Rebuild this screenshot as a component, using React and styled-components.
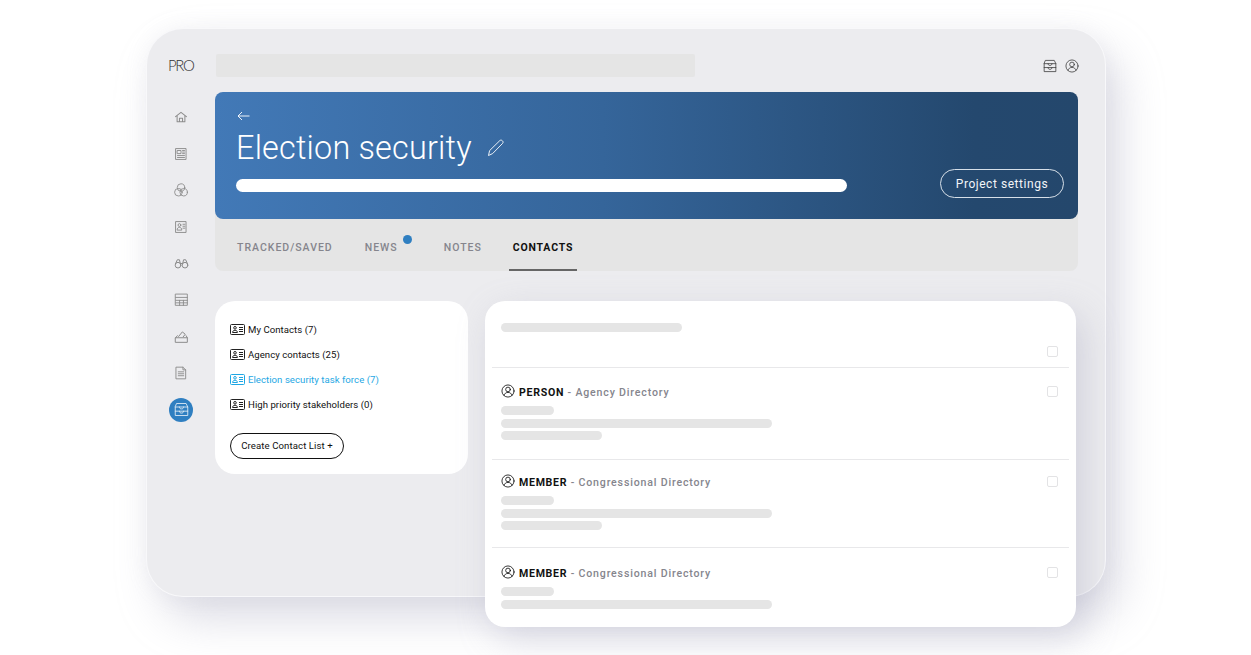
import React from 'react';
import styled, { createGlobalStyle } from 'styled-components';

const GlobalStyle = createGlobalStyle`
    html, body {
        margin: 0;
        padding: 0;
        background: #fff;
        font-family: "Roboto", "Liberation Sans", sans-serif;
    }
`;

const Page = styled.div`
    width: 1251px;
    height: 655px;
    padding: 29px 0 0 147px;
    box-sizing: border-box;
    overflow: hidden;
    background: #fff;
`;

const Device = styled.div`
    width: 958px;
    height: 567px;
    box-sizing: border-box;
    padding: 25px 27px 0 22px;
    border-radius: 36px;
    background: #ececef;
    box-shadow: 0 0 0 1px #f8f8fa, 14px 22px 44px rgba(165, 165, 188, 0.4), 0 0 22px rgba(190, 190, 205, 0.14);
    display: grid;
    grid-template-columns: 46px 1fr;
    grid-template-rows: 23px 1fr;
    row-gap: 15px;
`;

const Logo = styled.div`
    margin-left: -1px;
    font-family: "Lato", sans-serif;
    font-weight: 300;
    font-size: 15px;
    line-height: 23px;
    color: #333;
    letter-spacing: -1.4px;
`;

const TopBar = styled.div`
    display: flex;
    align-items: center;
    justify-content: space-between;
`;

const SearchBar = styled.div`
    width: 479px;
    height: 23px;
    margin-left: 1px;
    background: #e5e5e5;
    border-radius: 2px;
`;

const TopIcons = styled.div`
    display: flex;
    align-items: center;
    gap: 8px;
    margin-right: -1px;
    color: #3a3a3a;
`;

const TopIcon = styled.span`
    display: flex;
`;

const Sidebar = styled.nav`
    width: 24px;
    padding-top: 16px;
    display: flex;
    flex-direction: column;
    align-items: center;
    gap: 18.6px;
`;

const NavItem = styled.div`
    width: 18px;
    height: 18px;
    display: flex;
    align-items: center;
    justify-content: center;
    color: #8c8c8c;
`;

const ActiveNav = styled.div`
    width: 24px;
    height: 24px;
    margin-top: -3px;
    border-radius: 50%;
    background: #2f7fc1;
    color: #e8f0f8;
    display: flex;
    align-items: center;
    justify-content: center;
`;

const Main = styled.main`
    display: flex;
    flex-direction: column;
    min-width: 0;
`;

const Hero = styled.section`
    height: 127px;
    box-sizing: border-box;
    padding: 15px 14px 0 21px;
    border-radius: 8px;
    background: linear-gradient(90deg, #4279b7 0%, #35659a 45%, #24486e 88%, #24476c 100%);
    color: #fff;
    position: relative;
    z-index: 1;
`;

const BackArrow = styled.div`
    height: 18px;
    margin-left: 1px;
    display: flex;
    align-items: center;
`;

const TitleRow = styled.div`
    display: flex;
    align-items: center;
    gap: 15px;
    height: 40px;
    margin-top: 3px;
`;

const Title = styled.h1`
    margin: 0;
    font-weight: 300;
    font-size: 32.4px;
    line-height: 40px;
    letter-spacing: 0.2px;
`;

const HeroBottom = styled.div`
    display: flex;
    align-items: center;
    justify-content: space-between;
    margin-top: 4px;
`;

const ProgressBar = styled.div`
    width: 611px;
    height: 13px;
    margin-top: 1px;
    border-radius: 7px;
    background: #fff;
`;

const SettingsButton = styled.button`
    width: 124px;
    height: 29px;
    padding: 0;
    margin-top: -3px;
    border: 1px solid #d6dfe8;
    border-radius: 15px;
    background: transparent;
    color: #f2f5f8;
    font-family: inherit;
    font-size: 12px;
    letter-spacing: 0.55px;
`;

const Tabs = styled.div`
    margin-top: -8px;
    padding: 8px 0 0 22px;
    display: flex;
    border-radius: 0 0 8px 8px;
    background: #e5e5e5;
`;

const Tab = styled.div`
    position: relative;
    margin-left: ${p => p.$gap}px;
    padding: 7px ${p => (p.$active ? 4 : 0)}px 0;
    height: 52px;
    box-sizing: border-box;
    display: flex;
    align-items: center;
    font-size: 10.5px;
    font-weight: ${p => (p.$active ? 700 : 500)};
    letter-spacing: ${p => (p.$active ? 0.8 : 1)}px;
    color: ${p => (p.$active ? '#111' : '#85858d')};
    border-bottom: 2px solid ${p => (p.$active ? '#666' : 'transparent')};
`;

const Dot = styled.span`
    position: absolute;
    top: 16px;
    right: -14px;
    width: 9px;
    height: 9px;
    border-radius: 50%;
    background: #2f7fc1;
`;

const Panels = styled.div`
    margin-top: 30px;
    display: flex;
    align-items: flex-start;
    gap: 17px;
`;

const ListCard = styled.aside`
    width: 253px;
    box-sizing: border-box;
    padding: 20px 15px 15px;
    border-radius: 20px;
    background: #fff;
`;

const ContactLists = styled.ul`
    list-style: none;
    margin: 0 0 20px;
    padding: 0;
    display: flex;
    flex-direction: column;
    gap: 9.3px;
`;

const ContactList = styled.li`
    height: 16px;
    display: flex;
    align-items: center;
    gap: 3px;
    font-size: 9.6px;
    letter-spacing: 0.04px;
    color: ${p => (p.$active ? '#1ea7e4' : '#111')};
`;

const CreateButton = styled.button`
    width: 114px;
    height: 26px;
    padding: 0;
    border: 1px solid #111;
    border-radius: 13px;
    background: #fff;
    color: #111;
    font-family: inherit;
    font-size: 9.6px;
    letter-spacing: 0.1px;
`;

const ResultsCard = styled.section`
    width: 591px;
    box-sizing: border-box;
    padding: 0 7px;
    border-radius: 20px;
    background: #fff;
    box-shadow: 8px 12px 34px rgba(165, 165, 190, 0.38);
`;

const Row = styled.div`
    padding: ${p => p.$top}px 11px ${p => p.$bottom}px 9px;
    border-bottom: ${p => (p.$last ? 'none' : '1px solid #e8e8ea')};
`;

const RowHead = styled.div`
    height: 16px;
    display: flex;
    align-items: center;
    gap: 4px;
`;

const RowTitle = styled.span`
    margin-bottom: 1px;
`;

const Kind = styled.span`
    font-size: 10.6px;
    font-weight: 700;
    letter-spacing: 0.7px;
    color: #111;
`;

const Source = styled.span`
    font-size: 10.6px;
    font-weight: 500;
    letter-spacing: 0.82px;
    color: #85858d;
`;

const Checkbox = styled.span`
    width: 11px;
    height: 11px;
    margin-left: auto;
    display: block;
    border: 1px solid #e3e3e5;
    border-radius: 2px;
    box-sizing: border-box;
`;

const Lines = styled.div`
    margin-top: 7px;
    display: flex;
    flex-direction: column;
    gap: 3.5px;
`;

const Line = styled.div`
    width: ${p => p.$w}px;
    height: 9px;
    border-radius: 5px;
    background: #e5e5e5;
`;

const HeadLine = styled(Line)`
    margin-bottom: 14px;
`;

const Glyph = ({ size = 18, children }) => (
    <svg width={size} height={size} viewBox="0 0 18 18" fill="none" stroke="currentColor" strokeWidth="1" strokeLinecap="round" strokeLinejoin="round">
        {children}
    </svg>
);

const HomeIcon = () => (
    <Glyph size={14}><path d="M2 8.5 9 3l7 5.5M4 7.5V15h10V7.5M7 15v-4.5h4V15" strokeWidth="1.3" /></Glyph>
);
const NewsIcon = () => (
    <Glyph size={14}><path d="M2.5 2h13v14h-13zM4.5 4.5h4.5v4H4.5zM11 4.5h2.5M11 6.5h2.5M11 8.5h2.5M4.5 11h9M4.5 13.5h9" strokeWidth="1.2" /></Glyph>
);
const VennIcon = () => (
    <Glyph size={16}><circle cx="9" cy="6.2" r="4.2" /><circle cx="6" cy="11.5" r="4.2" /><circle cx="12" cy="11.5" r="4.2" /></Glyph>
);
const CardBookIcon = () => (
    <Glyph size={14}><path d="M2.5 2h13v14h-13zM11.5 5.5h2.5M11.5 8h2.5M11.5 10.5h2.5" strokeWidth="1.2" /><circle cx="7" cy="6.5" r="1.8" strokeWidth="1.2" /><path d="M4 12.5c0-2 1.3-3 3-3s3 1 3 3z" strokeWidth="1.2" /></Glyph>
);
const BinocularsIcon = () => (
    <Glyph size={15}><circle cx="4.8" cy="11" r="3.4" strokeWidth="1.2" /><circle cx="13.2" cy="11" r="3.4" strokeWidth="1.2" /><path d="M7.6 9h2.8M2 9l2-4.5h2.5L7.6 9M16 9l-2-4.5h-2.5L10.4 9" strokeWidth="1.2" /></Glyph>
);
const CalendarIcon = () => (
    <Glyph size={15}><path d="M2 2.5h14v13.5H2zM2 6.5h14M2 10h14M2 13h14M6.7 10v6M11.3 10v6" strokeWidth="1.1" /></Glyph>
);
const BallotIcon = () => (
    <Glyph size={15}><path d="M2 10.5h14V16H2zM2 10.5 4 8M16 10.5 14.5 8M5.5 9 10 3.5l3.5 2.8-2.4 3" strokeWidth="1.2" /></Glyph>
);
const DocIcon = () => (
    <Glyph size={14}><path d="M3 1.5h8.5l3.5 3.5v11.5H3zM11.5 1.5V5H15M5.5 7.5h7M5.5 10h7M5.5 12.5h7" strokeWidth="1.2" /></Glyph>
);
const InboxIcon = ({ size = 14 }) => (
    <Glyph size={size}>
        <path d="M3.5 1.8h11L16.5 6v10.2h-15V6zM1.5 6h15M1.5 11h15M6.5 6c0 1.6 1 2.3 2.5 2.3s2.5-.7 2.5-2.3M6.5 11c0 1.6 1 2.3 2.5 2.3s2.5-.7 2.5-2.3" />
    </Glyph>
);
const PersonCircle = ({ size = 14 }) => (
    <Glyph size={size}><circle cx="9" cy="9" r="7.8" /><circle cx="9" cy="7" r="3" /><path d="M3.8 14.6c.8-2.6 2.8-3.8 5.2-3.8s4.4 1.2 5.2 3.8" /></Glyph>
);
const CardIcon = styled.svg`
    color: ${p => (p.$active ? '#1ea7e4' : '#222')};
`;
const ContactCard = ({ active }) => (
    <CardIcon $active={active} width="15" height="11" viewBox="0 0 15 11" fill="none" stroke="currentColor" strokeWidth="1">
        <rect x="0.5" y="0.5" width="14" height="10" rx="1" />
        <circle cx="5" cy="3.8" r="1.3" />
        <path d="M2.6 8.5c0-1.5 1-2.2 2.4-2.2s2.4.7 2.4 2.2zM9 3.5h4M9 5.5h4M9 7.5h4" />
    </CardIcon>
);

const navIcons = [HomeIcon, NewsIcon, VennIcon, CardBookIcon, BinocularsIcon, CalendarIcon, BallotIcon, DocIcon];

const lists = [
    { name: 'My Contacts (7)' },
    { name: 'Agency contacts (25)' },
    { name: 'Election security task force (7)', active: true },
    { name: 'High priority stakeholders (0)' },
];

const rows = [
    { kind: 'PERSON', source: 'Agency Directory', top: 15, bottom: 19, lines: [53, 271, 101] },
    { kind: 'MEMBER', source: 'Congressional Directory', top: 13, bottom: 17, lines: [53, 271, 101] },
    { kind: 'MEMBER', source: 'Congressional Directory', top: 16, bottom: 18, lines: [53, 271], last: true },
];

const tabs = [
    { name: 'TRACKED/SAVED', gap: 0 },
    { name: 'NEWS', gap: 32, dot: true },
    { name: 'NOTES', gap: 46 },
    { name: 'CONTACTS', gap: 27, active: true },
];

export default function App() {
    return (
        <Page>
            <GlobalStyle />
            <Device>
                <Logo>PRO</Logo>
                <TopBar>
                    <SearchBar />
                    <TopIcons>
                        <TopIcon><InboxIcon size={14} /></TopIcon>
                        <TopIcon><PersonCircle size={14} /></TopIcon>
                    </TopIcons>
                </TopBar>
                <Sidebar>
                    {navIcons.map((Icon, i) => (
                        <NavItem key={i}><Icon /></NavItem>
                    ))}
                    <ActiveNav><InboxIcon size={15} /></ActiveNav>
                </Sidebar>
                <Main>
                    <Hero>
                        <BackArrow>
                            <svg width="13" height="10" viewBox="0 0 13 10" fill="none" stroke="#fff" strokeWidth="0.9">
                                <path d="M12.5 5H1M5 1 1 5l4 4" />
                            </svg>
                        </BackArrow>
                        <TitleRow>
                            <Title>Election security</Title>
                            <svg width="18" height="18" viewBox="0 0 18 18" fill="none" stroke="#fff" strokeWidth="0.9" strokeLinejoin="round">
                                <path d="M1.5 16.5 2.6 11.6 12.8 1.6c.8-.7 1.8-.6 2.6.2s.9 1.8.2 2.6L5.6 14.6z" />
                            </svg>
                        </TitleRow>
                        <HeroBottom>
                            <ProgressBar />
                            <SettingsButton>Project settings</SettingsButton>
                        </HeroBottom>
                    </Hero>
                    <Tabs>
                        {tabs.map(t => (
                            <Tab key={t.name} $gap={t.gap} $active={t.active}>
                                {t.name}
                                {t.dot && <Dot />}
                            </Tab>
                        ))}
                    </Tabs>
                    <Panels>
                        <ListCard>
                            <ContactLists>
                                {lists.map(l => (
                                    <ContactList key={l.name} $active={l.active}>
                                        <ContactCard active={l.active} />
                                        {l.name}
                                    </ContactList>
                                ))}
                            </ContactLists>
                            <CreateButton>Create Contact List +</CreateButton>
                        </ListCard>
                        <ResultsCard>
                            <Row $top={22} $bottom={10}>
                                <HeadLine $w={181} />
                                <Checkbox />
                            </Row>
                            {rows.map((r, i) => (
                                <Row key={i} $top={r.top} $bottom={r.bottom} $last={r.last}>
                                    <RowHead>
                                        <PersonCircle size={14} />
                                        <RowTitle>
                                            <Kind>{r.kind}</Kind>
                                            <Source> - {r.source}</Source>
                                        </RowTitle>
                                        <Checkbox />
                                    </RowHead>
                                    <Lines>
                                        {r.lines.map((w, j) => <Line key={j} $w={w} />)}
                                    </Lines>
                                </Row>
                            ))}
                        </ResultsCard>
                    </Panels>
                </Main>
            </Device>
        </Page>
    );
}
